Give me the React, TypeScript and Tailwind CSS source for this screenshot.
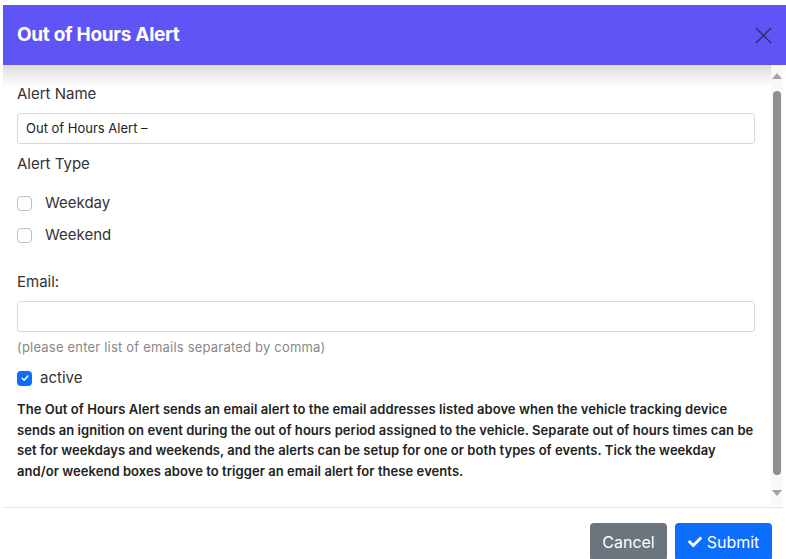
import React from 'react';
import { FaCheck } from 'react-icons/fa';

const font = { fontFamily: 'Inter, "Noto Sans", sans-serif' };

const Checkbox: React.FC<{ checked?: boolean }> = ({ checked }) =>
  checked ? (
    <span className="w-[15px] h-[15px] rounded-[4px] bg-[#0d6efd] flex items-center justify-center shrink-0">
      <svg viewBox="0 0 16 16" className="w-[10px] h-[10px]">
        <path d="M3.5 8.5l3 3 6-6.5" fill="none" stroke="white" strokeWidth="2.4" strokeLinecap="round" strokeLinejoin="round" />
      </svg>
    </span>
  ) : (
    <span className="w-[15px] h-[15px] rounded-[4px] border border-[#b9bfc5] bg-white shrink-0" />
  );

const App: React.FC = () => {
  return (
    <div className="w-[786px] h-[559px] overflow-hidden bg-white pt-[5px] pl-[3px]" style={font}>
      <div className="w-[783px] flex flex-col">
        {/* Header */}
        <div className="h-[60px] bg-[#5f55f7] flex items-center justify-between pl-[14px] pr-[14px]">
          <h1 className="text-[19px] font-bold text-white tracking-[-0.3px]">Out of Hours Alert</h1>
          <svg viewBox="0 0 18 18" className="w-[17px] h-[17px]">
            <path d="M1 1l16 16M17 1L1 17" stroke="#2d2a6e" strokeWidth="1.6" fill="none" />
          </svg>
        </div>

        {/* Body */}
        <div className="flex h-[440px] relative">
          <div className="absolute left-0 right-[15px] top-0 h-[22px] bg-gradient-to-b from-[#dcdcdc] to-white/0 pointer-events-none" />
          <div className="flex-1 pl-[14px] pr-[16px] pt-[19px] text-[#333]">
            <label className="block text-[15px] leading-[20px]">Alert Name</label>
            <div className="mt-[9px] h-[31px] border border-[#d5dbdb] rounded-[3px] flex items-center px-[8px] text-[13px] text-[#222]">
              Out of Hours Alert –
            </div>
            <label className="block mt-[10px] text-[15px] leading-[20px]">Alert Type</label>
            <div className="mt-[19px] flex items-center gap-[13px] h-[20px]">
              <Checkbox />
              <span className="text-[15px]">Weekday</span>
            </div>
            <div className="mt-[12px] flex items-center gap-[13px] h-[20px]">
              <Checkbox />
              <span className="text-[15px]">Weekend</span>
            </div>
            <label className="block mt-[27px] text-[15px] leading-[20px]">Email:</label>
            <div className="mt-[9px] h-[31px] border border-[#d5dbdb] rounded-[3px]" />
            <p className="mt-[6px] text-[13px] leading-[18px] text-[#888] tracking-[0.2px]">(please enter list of emails separated by comma)</p>
            <div className="mt-[12px] flex items-center gap-[8px] h-[20px]">
              <Checkbox checked />
              <span className="text-[15px]">active</span>
            </div>
            <p className="mt-[11px] text-[13px] leading-[20.6px] font-semibold text-[#222] whitespace-nowrap tracking-[0.06px]">
              The Out of Hours Alert sends an email alert to the email addresses listed above when the vehicle tracking device
              <br />
              sends an ignition on event during the out of hours period assigned to the vehicle. Separate out of hours times can be
              <br />
              set for weekdays and weekends, and the alerts can be setup for one or both types of events. Tick the weekday
              <br />
              and/or weekend boxes above to trigger an email alert for these events.
            </p>
          </div>
          {/* Scrollbar */}
          <div className="w-[12px] bg-[#f8f8f8] flex flex-col items-center mr-[3px]">
            <div className="mt-[8px] w-0 h-0 border-l-[5px] border-r-[5px] border-b-[6px] border-l-transparent border-r-transparent border-b-[#a3a3a3]" />
            <div className="mt-[12px] w-[8px] h-[384px] rounded-[4px] bg-[#8f8f8f]" />
            <div className="mt-[15px] w-0 h-0 border-l-[5px] border-r-[5px] border-t-[6px] border-l-transparent border-r-transparent border-t-[#a3a3a3]" />
          </div>
        </div>

        {/* Footer */}
        <div className="border-t border-[#e3e3e3] mr-[3px] mt-[2px] flex justify-end gap-[8px] pt-[15px] pr-[11px]">
          <button className="w-[77px] h-[38px] rounded-[4px] bg-[#6c757d] text-white text-[16px]">Cancel</button>
          <button className="w-[97px] h-[38px] rounded-[4px] bg-[#0d6efd] text-white text-[16px] flex items-center justify-center gap-[5px]">
            <FaCheck className="w-[14px] h-[14px]" />
            Submit
          </button>
        </div>
      </div>
    </div>
  );
};

export default App;
